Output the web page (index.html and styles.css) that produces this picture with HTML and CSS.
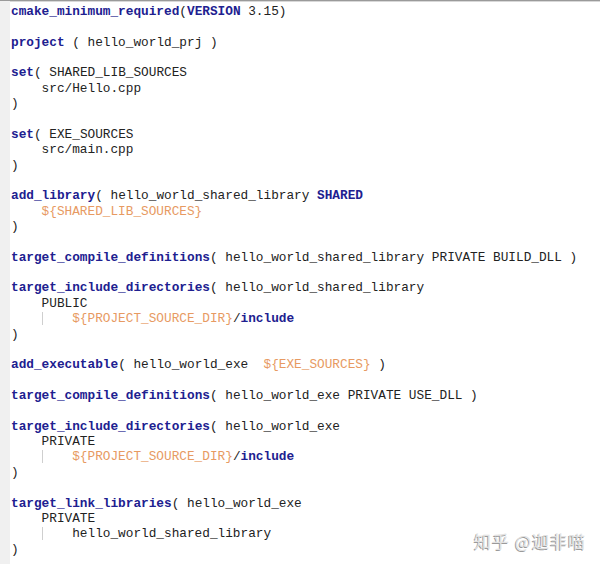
FILE: index.html
```html
<!DOCTYPE html>
<html>
<head>
<meta charset="utf-8">
<link rel="stylesheet" href="styles.css">
</head>
<body>
<div class="editor">
<div class="gutter"></div>
<div class="code">
<div class="ln"><span class="c">cmake_minimum_required</span>(<span class="k">VERSION</span> 3.15)</div>
<div class="ln"></div>
<div class="ln"><span class="c">project</span> ( hello_world_prj )</div>
<div class="ln"></div>
<div class="ln"><span class="c">set</span>( SHARED_LIB_SOURCES</div>
<div class="ln i1">src/Hello.cpp</div>
<div class="ln">)</div>
<div class="ln"></div>
<div class="ln"><span class="c">set</span>( EXE_SOURCES</div>
<div class="ln i1">src/main.cpp</div>
<div class="ln">)</div>
<div class="ln"></div>
<div class="ln"><span class="c">add_library</span>( hello_world_shared_library <span class="k">SHARED</span></div>
<div class="ln i1"><span class="v">${SHARED_LIB_SOURCES}</span></div>
<div class="ln">)</div>
<div class="ln"></div>
<div class="ln"><span class="c">target_compile_definitions</span>( hello_world_shared_library PRIVATE BUILD_DLL )</div>
<div class="ln"></div>
<div class="ln"><span class="c">target_include_directories</span>( hello_world_shared_library</div>
<div class="ln i1">PUBLIC</div>
<div class="ln i2"><span class="v">${PROJECT_SOURCE_DIR}</span>/<span class="c">include</span></div>
<div class="ln">)</div>
<div class="ln"></div>
<div class="ln"><span class="c">add_executable</span>( hello_world_exe  <span class="v">${EXE_SOURCES}</span> )</div>
<div class="ln"></div>
<div class="ln"><span class="c">target_compile_definitions</span>( hello_world_exe PRIVATE USE_DLL )</div>
<div class="ln"></div>
<div class="ln"><span class="c">target_include_directories</span>( hello_world_exe</div>
<div class="ln i1">PRIVATE</div>
<div class="ln i2"><span class="v">${PROJECT_SOURCE_DIR}</span>/<span class="c">include</span></div>
<div class="ln">)</div>
<div class="ln"></div>
<div class="ln"><span class="c">target_link_libraries</span>( hello_world_exe</div>
<div class="ln i1">PRIVATE</div>
<div class="ln i2">hello_world_shared_library</div>
<div class="ln">)</div>
</div>
</div>
<div class="watermark">知乎 @迦非喵</div>
</body>
</html>
```

FILE: styles.css
```css
html, body {
  margin: 0;
  padding: 0;
  background: #ffffff;
}
body {
  width: 600px;
  height: 564px;
  overflow: hidden;
  position: relative;
}
.editor {
  display: flex;
  height: 564px;
  border-top: 1px solid #9a9a9a;
  box-shadow: inset 0 1px 0 #d8d8d8;
  box-sizing: border-box;
}
.gutter {
  width: 10px;
  flex: none;
  background: #f0f0f0;
}
.code {
  display: flex;
  flex-direction: column;
  padding: 3px 0 0 1px;
  font-family: "Liberation Mono", "Courier New", monospace;
  font-size: 12.75px;
  color: #222222;
}
.ln {
  height: 15.37px;
  line-height: 15.37px;
  white-space: pre;
}
.i1 {
  padding-left: 30.6px;
}
.i2 {
  margin-left: 30.6px;
  padding-left: 30.6px;
  background: linear-gradient(#cfcfcf, #cfcfcf) no-repeat 0 1px / 1px 13px;
}
.c, .k {
  color: #202090;
  font-weight: bold;
}
.v {
  color: #e79a62;
}
.watermark {
  position: absolute;
  right: 14px;
  bottom: 13px;
  font-family: "Noto Sans CJK SC", sans-serif;
  font-size: 17px;
  line-height: 20px;
  color: #e2e2e2;
  text-shadow: -1px 1px 0 #9a9a9a;
  letter-spacing: 1px;
}
```
